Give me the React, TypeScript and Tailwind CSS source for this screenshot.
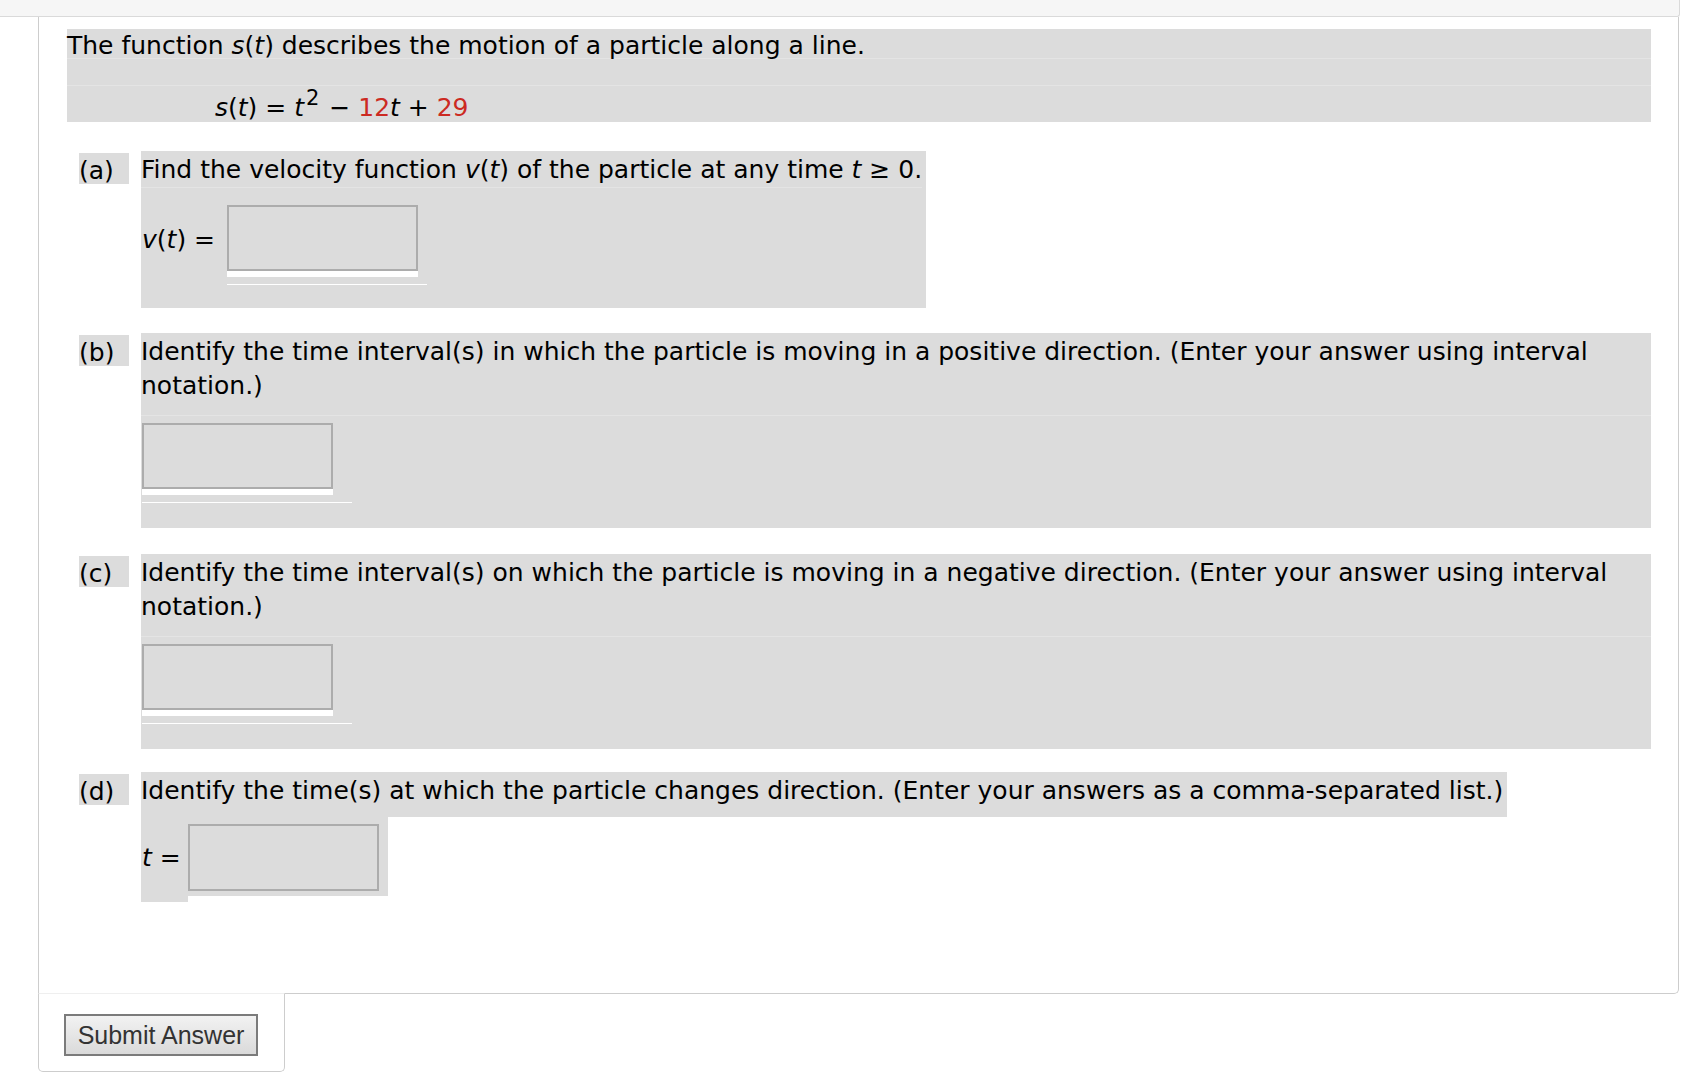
import React from 'react';

const GRAY = 'bg-[#dcdcdc]';

function Answer({ wide = 200 }: { wide?: number }) {
  return (
    <div className="flex flex-col">
      <div className="w-[191px] h-[66px] border-2 border-[#acacac] bg-[#dcdcdc]" />
      <div className="w-[191px] h-[6px] bg-white" />
      <div className="h-[7px]" />
      <div className={`h-px bg-white ${wide > 200 ? 'w-[210px]' : 'w-[200px]'}`} />
    </div>
  );
}

function Label({ children }: { children: React.ReactNode }) {
  return (
    <div className={`w-[50px] h-[31px] mt-[2px] mr-[12px] ${GRAY} leading-[35px] shrink-0`}>{children}</div>
  );
}

function I({ children }: { children: React.ReactNode }) {
  return <span className="italic">{children}</span>;
}

function IntervalPart({ letter, text }: { letter: string; text: React.ReactNode }) {
  return (
    <div className="flex pl-[12px]">
      <Label>({letter})</Label>
      <div className={`flex-1 ${GRAY}`}>
        <p className="leading-[34px] pt-[2px]">{text}</p>
        <div className="border-t border-[#e4e4e4] mt-[12px] pt-[7px] pl-px">
          <Answer wide={210} />
        </div>
        <div className="h-[25px]" />
      </div>
    </div>
  );
}

export default function App() {
  return (
    <div className="w-full h-[1076px] bg-white text-black overflow-hidden" style={{ fontFamily: '"DejaVu Sans", Verdana, sans-serif' }}>
      {/* top strip */}
      <div className="w-[1680px] h-[17px] bg-[#f6f6f6] border-b border-r border-[#dadada] rounded-br-[3px]" />

      {/* question panel */}
      <div className="ml-[38px] w-[1641px] h-[977px] border-l border-r border-b border-[#cdcdcd] rounded-br-[5px] pt-[12px] pl-[28px] pr-[27px] text-[25px]">
        {/* intro */}
        <div className={GRAY}>
          <p className="h-[30px] leading-[34px] border-b border-[#e4e4e4]">
            The function <I>s</I>(<I>t</I>) describes the motion of a particle along a line.
          </p>
          <div className="h-[27px] border-b border-[#e4e4e4]" />
          <p className="h-[36px] leading-[43px] pl-[148px]">
            <I>s</I>(<I>t</I>) = <I>t</I>
            <sup className="text-[21px] -top-[11px] pl-[2px] pr-[2px]">2</sup> − <span className="text-[#cc2a22]">12</span>
            <I>t</I> + <span className="text-[#cc2a22]">29</span>
          </p>
        </div>

        {/* (a) */}
        <div className="flex pl-[12px] mt-[29px]">
          <Label>(a)</Label>
          <div className={`w-fit pr-[4px] ${GRAY}`}>
            <p className="leading-[34px] pt-[2px] border-b border-[#e4e4e4]">
              Find the velocity function <I>v</I>(<I>t</I>) of the particle at any time <I>t</I> ≥ 0.
            </p>
            <div className="flex items-start pt-[17px] pb-[23px]">
              <div className="w-[86px] h-[66px] flex items-center pl-px pt-[4px]">
                <I>v</I>(<I>t</I>)&nbsp;=
              </div>
              <Answer />
            </div>
          </div>
        </div>

        {/* (b) */}
        <div className="mt-[25px]">
          <IntervalPart
            letter="b"
            text="Identify the time interval(s) in which the particle is moving in a positive direction. (Enter your answer using interval notation.)"
          />
        </div>

        {/* (c) */}
        <div className="mt-[26px]">
          <IntervalPart
            letter="c"
            text="Identify the time interval(s) on which the particle is moving in a negative direction. (Enter your answer using interval notation.)"
          />
        </div>

        {/* (d) */}
        <div className="flex pl-[12px] mt-[23px]">
          <Label>(d)</Label>
          <div>
            <div className={`w-fit pr-[4px] pt-[2px] pb-[9px] ${GRAY}`}>
              <p className="leading-[34px]">
                Identify the time(s) at which the particle changes direction. (Enter your answers as a comma-separated list.)
              </p>
            </div>
            <div className="flex items-start">
              <div className={`w-[47px] h-[85px] ${GRAY} flex items-center pl-px pb-[4px]`}>
                <I>t</I>&nbsp;=
              </div>
              <div className={`w-[200px] h-[79px] ${GRAY} pt-[7px]`}>
                <div className="w-[191px] h-[67px] border-2 border-[#acacac] bg-[#dcdcdc]" />
              </div>
            </div>
          </div>
        </div>
      </div>

      {/* submit tab */}
      <div className="ml-[38px] -mt-px w-[247px] h-[79px] border-l border-r border-b border-t border-t-[#efefef] border-[#cdcdcd] rounded-b-[5px] pl-[25px] pt-[20px]">
        <button
          className="w-[194px] h-[42px] border-2 border-[#7b7b7b] bg-gradient-to-b from-[#f2f2f2] to-[#dadada] text-[25px] text-[#333] leading-none"
          style={{ fontFamily: '"Liberation Sans", Arial, sans-serif' }}
        >
          Submit Answer
        </button>
      </div>
    </div>
  );
}
